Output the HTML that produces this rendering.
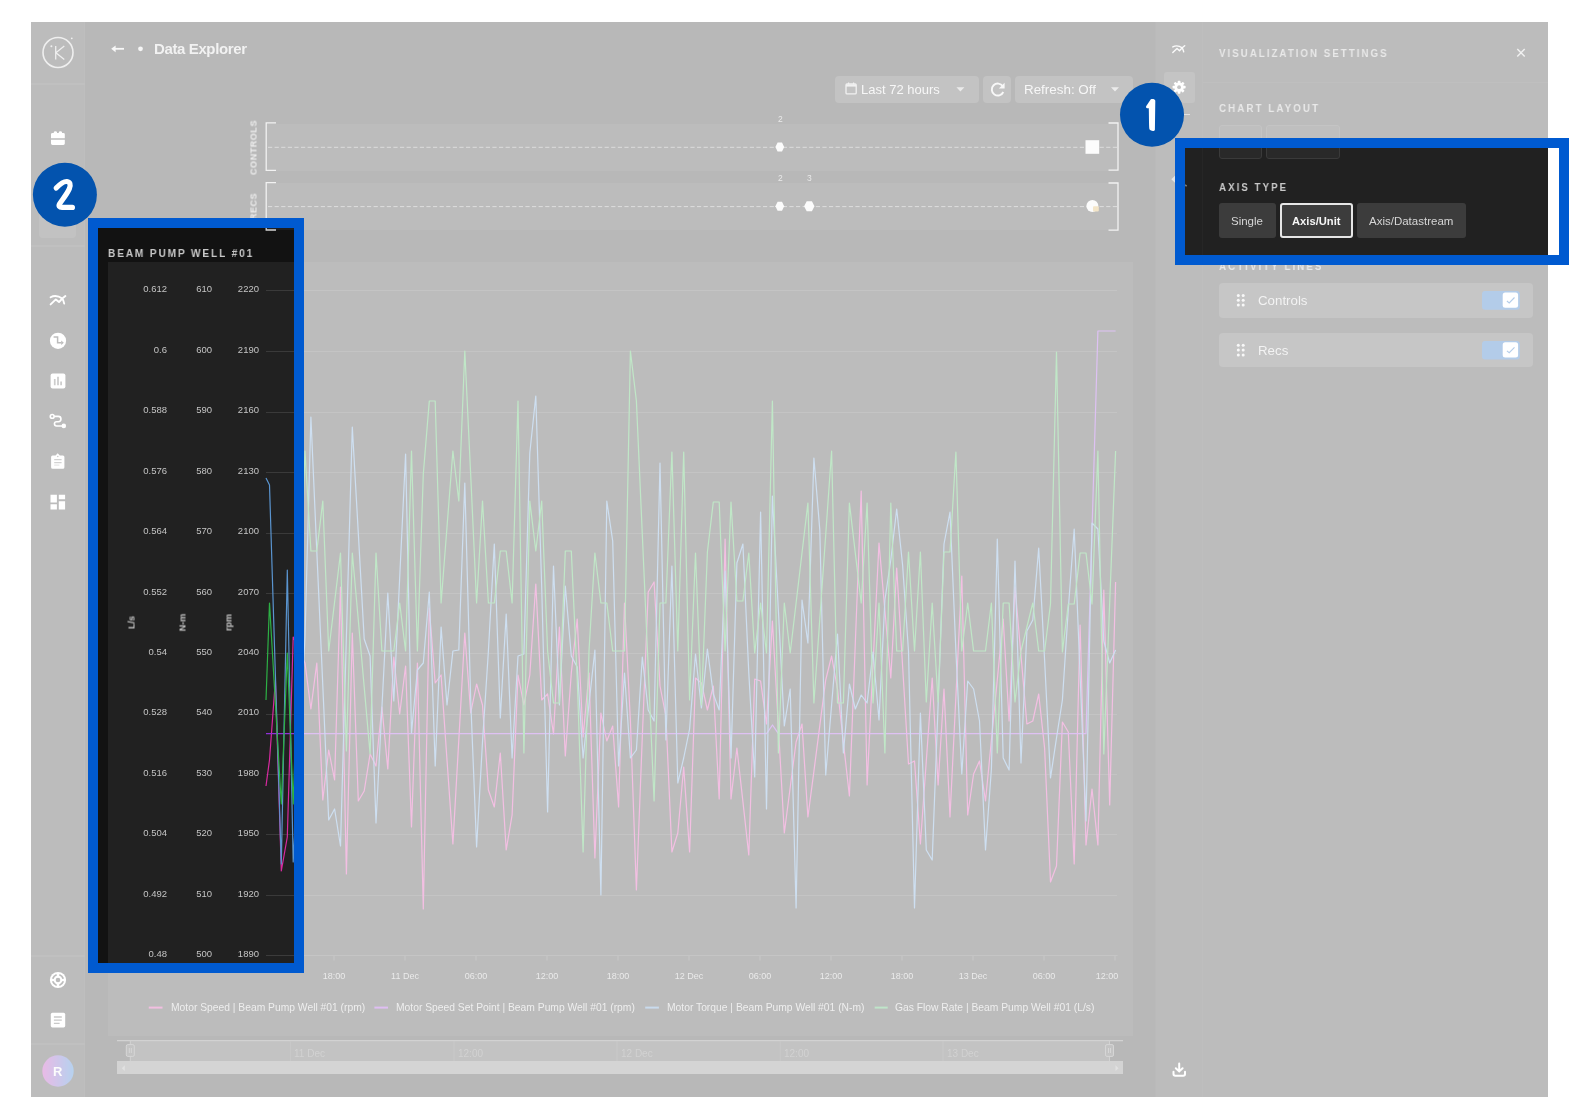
<!DOCTYPE html>
<html><head><meta charset="utf-8">
<style>
*{box-sizing:border-box;margin:0;padding:0}
html,body{width:1580px;height:1120px;overflow:hidden;background:#fff}
body{position:relative;font-family:"Liberation Sans",sans-serif;color:#e0e0e0}
.a{position:absolute}
svg.a{left:0;top:0;overflow:visible}
.t{position:absolute;white-space:nowrap;line-height:1}
.t,.yl,.xl,.lg,.nl,.sh{will-change:transform}
.yl{position:absolute;white-space:nowrap;line-height:1;font-size:9.5px;color:#c4c4c4;text-align:right;width:40px}
.xl{position:absolute;white-space:nowrap;line-height:1;font-size:9px;color:#bdbdbd;text-align:center;width:60px}
.lg{position:absolute;white-space:nowrap;line-height:1;font-size:10.3px;color:#c8c8c8}
.nl{position:absolute;white-space:nowrap;line-height:1;font-size:10px;color:#6a6a6a}
.sh{position:absolute;white-space:nowrap;line-height:1;font-size:11.5px;font-weight:bold;color:#b4b4b4;transform:scaleX(0.85);transform-origin:0 0}
</style></head><body>
<div class="a" style="left:31px;top:22px;width:1517px;height:1075px;background:#121212"></div>

<!-- ============ SIDEBAR ============ -->
<div class="a" style="left:31px;top:22px;width:54px;height:1075px;background:#202020"></div>
<div class="a" style="left:84px;top:22px;width:1px;height:1075px;background:#262626"></div>
<div class="a" style="left:31px;top:83px;width:54px;height:2px;background:#2e2e2e"></div>
<div class="a" style="left:31px;top:245px;width:54px;height:2px;background:#2e2e2e"></div>
<div class="a" style="left:31px;top:955px;width:54px;height:2px;background:#2e2e2e"></div>
<div class="a" style="left:31px;top:1043px;width:54px;height:2px;background:#2e2e2e"></div>
<div class="a" style="left:39px;top:199px;width:37px;height:39px;background:#353535;border-radius:4px"></div>
<svg class="a" width="1580" height="1120">
 <g fill="none" stroke="#c8c8c8">
  <circle cx="58" cy="52.5" r="15" stroke-width="1.6"/>
  <path d="M55.7 46V59.6M64.3 46L55.9 52.8L64.3 59.6" stroke-width="1.3"/>
 </g>
 <circle cx="51.4" cy="46.2" r="1" fill="#c8c8c8"/>
 <circle cx="71.8" cy="38.3" r="0.9" fill="#cfcfcf"/>
 <!-- calendar -->
 <path fill="#fff" d="M51 134.2Q51 133 52.5 133H53.8V132.2Q53.8 131.3 55.4 131.3Q57 131.3 57 132.2V133H58.8V132.2Q58.8 131.3 60.4 131.3Q62 131.3 62 132.2V133H63.3Q64.8 133 64.8 134.2V138.2H51Z M51 139.8H64.8V143.6Q64.8 145 63.3 145H52.5Q51 145 51 143.6Z"/>
 <!-- trend -->
 <path fill="none" stroke="#fff" stroke-width="1.9" stroke-linecap="round" stroke-linejoin="round" d="M50.6 297.3Q56 294.2 62.3 298.5Q63.6 300.5 64.2 303.6M50.6 304.4L55.8 299.4L59 302.1L62.3 298.5L65.4 296"/>
 <!-- circle step -->
 <circle cx="58" cy="340.8" r="8.1" fill="#fff"/>
 <path fill="none" stroke="#202020" stroke-width="1.5" d="M53.6 337H57.6V342.7H61.4"/>
 <path fill="#202020" d="M61.2 340.4L63.8 342.7L61.2 345Z"/>
 <!-- bar chart -->
 <rect x="50.6" y="373.6" width="14.8" height="14.9" rx="2" fill="#fff"/>
 <path fill="#595959" d="M53.9 379H55.6V385.3H53.9Z M57.1 376.7H58.9V385.3H57.1Z M60.2 381.6H62V385.3H60.2Z"/>
 <!-- route -->
 <circle cx="52.2" cy="416.4" r="1.9" fill="none" stroke="#fff" stroke-width="1.6"/>
 <path fill="none" stroke="#fff" stroke-width="1.6" d="M54.1 416.4H58.3A2.65 2.65 0 0 1 58.3 421.7H56.6A2.15 2.15 0 0 0 56.6 426H62"/>
 <circle cx="63.8" cy="425.9" r="2.3" fill="#fff"/>
 <!-- clipboard -->
 <path fill="#fff" d="M52.6 455.4H55.6L57.7 453.3L59.8 455.4H62.9Q64.4 455.4 64.4 456.9V467.2Q64.4 468.7 62.9 468.7H52.6Q51.1 468.7 51.1 467.2V456.9Q51.1 455.4 52.6 455.4Z"/>
 <path fill="none" stroke="#6a6a6a" stroke-width="1.1" d="M54.2 459.6H61.6M54.2 462.6H61.6"/>
 <path fill="none" stroke="#a0a0a0" stroke-width="1.1" d="M54.2 465.1H59.4"/>
 <circle cx="57.8" cy="456.5" r="0.8" fill="#505050"/>
 <!-- dashboard -->
 <path fill="#fff" d="M50.5 494.7H56.9V502.6H50.5Z M50.5 504.3H56.9V509.4H50.5Z M58.8 494.7H65.1V499.3H58.8Z M58.8 501.3H65.1V509.4H58.8Z"/>
 <!-- lifebuoy -->
 <circle cx="58" cy="980" r="8.1" fill="#fff"/>
 <circle cx="58" cy="980" r="2.3" fill="#202020"/>
 <path fill="none" stroke="#202020" stroke-width="1.7" stroke-linecap="round" d="M62.95 981.90A5.3 5.3 0 0 1 59.90 984.95M56.10 984.95A5.3 5.3 0 0 1 53.05 981.90M53.05 978.10A5.3 5.3 0 0 1 56.10 975.05M59.90 975.05A5.3 5.3 0 0 1 62.95 978.10"/>
 <!-- doc -->
 <rect x="50.8" y="1012.8" width="14.4" height="14.6" rx="1.6" fill="#fff"/>
 <path fill="none" stroke="#4a4a4a" stroke-width="1.3" d="M53.9 1017H61.8M53.9 1020.1H61.8M53.9 1023.3H59.6"/>
 <defs><linearGradient id="av" x1="0" x2="1" y1="0" y2="0"><stop offset="0" stop-color="#b419aa"/><stop offset="1" stop-color="#0b67c8"/></linearGradient></defs>
 <circle cx="58" cy="1071" r="15.7" fill="url(#av)"/>
</svg>
<div class="t" style="left:53px;top:1065px;font-size:13px;font-weight:bold;color:#f4f4f4">R</div>

<!-- ============ MAIN ============ -->
<svg class="a" width="1580" height="1120">
 <path fill="none" stroke="#e8e8e8" stroke-width="1.8" d="M113 48.8H124"/>
 <path fill="#e8e8e8" d="M111.2 48.8L115.6 45.4V52.2Z"/>
 <circle cx="140.5" cy="48.8" r="2.4" fill="#e0e0e0"/>
</svg>
<div class="t" style="left:154px;top:41.2px;font-size:15px;font-weight:bold;letter-spacing:-0.38px;color:#d4d4d4">Data Explorer</div>

<!-- toolbar -->
<div class="a" style="left:835px;top:76px;width:144px;height:27px;background:#363636;border-radius:4px"></div>
<div class="a" style="left:983px;top:76px;width:28px;height:27px;background:#363636;border-radius:4px"></div>
<div class="a" style="left:1015px;top:76px;width:118px;height:27px;background:#363636;border-radius:4px"></div>
<div class="t" style="left:861px;top:82.9px;font-size:13px;color:#e4e4e4">Last 72 hours</div>
<div class="t" style="left:1024px;top:82.6px;font-size:13.4px;color:#e4e4e4">Refresh: Off</div>
<svg class="a" width="1580" height="1120">
 <rect x="846" y="84" width="10.2" height="9.9" rx="1" fill="none" stroke="#cfcfcf" stroke-width="1.3"/>
 <path d="M846 85.5H856.2" stroke="#cfcfcf" stroke-width="2.2"/>
 <path d="M848.6 82.5V84.5M853.6 82.5V84.5" stroke="#cfcfcf" stroke-width="1.2"/>
 <path fill="#bdbdbd" d="M956.4 87.2H964.4L960.4 91.6Z M1111 87.2H1119L1115 91.6Z"/>
 <path fill="none" stroke="#e6e6e6" stroke-width="1.9" d="M1002.8 86.2A6 6 0 1 0 1003.3 92"/>
 <path fill="#e6e6e6" d="M1004.6 82.8V88.6H998.8Z"/>
</svg>

<!-- activity lanes -->
<div class="a" style="left:267px;top:124px;width:851px;height:47px;background:#1f1f1f"></div>
<div class="a" style="left:267px;top:183px;width:851px;height:47px;background:#1f1f1f"></div>
<div class="t" style="left:226px;top:142.5px;width:56px;font-size:9px;font-weight:bold;letter-spacing:0.55px;color:#c9c9c9;transform:rotate(-90deg);text-align:center">CONTROLS</div>
<div class="t" style="left:226px;top:202px;width:56px;font-size:9px;font-weight:bold;letter-spacing:0.55px;color:#c9c9c9;transform:rotate(-90deg);text-align:center">RECS</div>
<svg class="a" width="1580" height="1120">
 <g fill="none" stroke="#d4d4d4" stroke-width="1.3">
  <path d="M276 122.8H266.2V170.3H276M1108.5 123H1118V170.2H1108.5"/>
  <path d="M276 182.6H266.2V230H276M1108.5 183H1118V230.2H1108.5"/>
 </g>
 <g stroke="#8e8e8e" stroke-width="1" stroke-dasharray="4.2 2.4">
  <path d="M268 147.3H1117M268 206.6H1117"/>
 </g>
 <g fill="#f4f4f4">
  <path d="M777.6 142.4H782L784.2 146.9L782 151.4H777.6L775.4 146.9Z"/>
  <path d="M777.6 201.7H782L784.2 206.2L782 210.7H777.6L775.4 206.2Z"/>
  <path d="M806.7 201.2H811.9L814.5 206.2L811.9 211.2H806.7L804.1 206.2Z"/>
  <rect x="1085.5" y="140.2" width="13.7" height="13.6"/>
  <circle cx="1092.4" cy="206" r="6"/>
 </g>
 <rect x="1093" y="206.2" width="5.8" height="5.4" rx="1" fill="#d8a848"/>
</svg>
<div class="t" style="left:777.5px;top:115px;font-size:8.5px;color:#bdbdbd">2</div>
<div class="t" style="left:777.5px;top:174px;font-size:8.5px;color:#bdbdbd">2</div>
<div class="t" style="left:807px;top:174px;font-size:8.5px;color:#bdbdbd">3</div>

<!-- chart panel -->
<div class="a" style="left:108px;top:262px;width:1025px;height:773.5px;background:#212121"></div>
<div class="t" style="left:108px;top:247.8px;font-size:11.5px;font-weight:bold;letter-spacing:2.11px;color:#c8c8c8;transform:scaleX(0.88);transform-origin:0 0">BEAM PUMP WELL #01</div>

<!--GRID-->
<svg class="a" width="1580" height="1120">
<g stroke="#3a3a3a" stroke-width="1">
<path d="M266 290.5H1117"/>
<path d="M266 351.5H1117"/>
<path d="M266 412.5H1117"/>
<path d="M266 472.5H1117"/>
<path d="M266 533.5H1117"/>
<path d="M266 593.5H1117"/>
<path d="M266 653.5H1117"/>
<path d="M266 714.5H1117"/>
<path d="M266 774.5H1117"/>
<path d="M266 834.5H1117"/>
<path d="M266 895.5H1117"/>
</g>
<path d="M266 955.5H1117.6" stroke="#3c3c3c" stroke-width="1"/>
<path d="M334.0 955.5V960.5M405.0 955.5V960.5M476.0 955.5V960.5M547.0 955.5V960.5M618.0 955.5V960.5M689.0 955.5V960.5M760.0 955.5V960.5M831.0 955.5V960.5M902.0 955.5V960.5M973.0 955.5V960.5M1044.0 955.5V960.5M1115.0 955.5V960.5" stroke="#4a4a4a" stroke-width="1"/>
</svg>
<div class="yl" style="left:127.2px;top:284.3px">0.612</div>
<div class="yl" style="left:171.6px;top:284.3px">610</div>
<div class="yl" style="left:218.8px;top:284.3px">2220</div>
<div class="yl" style="left:127.2px;top:344.7px">0.6</div>
<div class="yl" style="left:171.6px;top:344.7px">600</div>
<div class="yl" style="left:218.8px;top:344.7px">2190</div>
<div class="yl" style="left:127.2px;top:405.2px">0.588</div>
<div class="yl" style="left:171.6px;top:405.2px">590</div>
<div class="yl" style="left:218.8px;top:405.2px">2160</div>
<div class="yl" style="left:127.2px;top:465.6px">0.576</div>
<div class="yl" style="left:171.6px;top:465.6px">580</div>
<div class="yl" style="left:218.8px;top:465.6px">2130</div>
<div class="yl" style="left:127.2px;top:526.1px">0.564</div>
<div class="yl" style="left:171.6px;top:526.1px">570</div>
<div class="yl" style="left:218.8px;top:526.1px">2100</div>
<div class="yl" style="left:127.2px;top:586.5px">0.552</div>
<div class="yl" style="left:171.6px;top:586.5px">560</div>
<div class="yl" style="left:218.8px;top:586.5px">2070</div>
<div class="yl" style="left:127.2px;top:647.0px">0.54</div>
<div class="yl" style="left:171.6px;top:647.0px">550</div>
<div class="yl" style="left:218.8px;top:647.0px">2040</div>
<div class="yl" style="left:127.2px;top:707.4px">0.528</div>
<div class="yl" style="left:171.6px;top:707.4px">540</div>
<div class="yl" style="left:218.8px;top:707.4px">2010</div>
<div class="yl" style="left:127.2px;top:767.9px">0.516</div>
<div class="yl" style="left:171.6px;top:767.9px">530</div>
<div class="yl" style="left:218.8px;top:767.9px">1980</div>
<div class="yl" style="left:127.2px;top:828.3px">0.504</div>
<div class="yl" style="left:171.6px;top:828.3px">520</div>
<div class="yl" style="left:218.8px;top:828.3px">1950</div>
<div class="yl" style="left:127.2px;top:888.8px">0.492</div>
<div class="yl" style="left:171.6px;top:888.8px">510</div>
<div class="yl" style="left:218.8px;top:888.8px">1920</div>
<div class="yl" style="left:127.2px;top:949.2px">0.48</div>
<div class="yl" style="left:171.6px;top:949.2px">500</div>
<div class="yl" style="left:218.8px;top:949.2px">1890</div>
<div class="t" style="left:111.5px;top:618.0px;width:40px;text-align:center;font-size:9px;font-weight:bold;color:#c8c8c8;transform:rotate(-90deg)">L/s</div>
<div class="t" style="left:163.2px;top:618.0px;width:40px;text-align:center;font-size:9px;font-weight:bold;color:#c8c8c8;transform:rotate(-90deg)">N-m</div>
<div class="t" style="left:209.0px;top:618.0px;width:40px;text-align:center;font-size:9px;font-weight:bold;color:#c8c8c8;transform:rotate(-90deg)">rpm</div>
<div class="xl" style="left:304.0px;top:971.5px">18:00</div>
<div class="xl" style="left:375.0px;top:971.5px">11 Dec</div>
<div class="xl" style="left:446.0px;top:971.5px">06:00</div>
<div class="xl" style="left:517.0px;top:971.5px">12:00</div>
<div class="xl" style="left:588.0px;top:971.5px">18:00</div>
<div class="xl" style="left:659.0px;top:971.5px">12 Dec</div>
<div class="xl" style="left:730.0px;top:971.5px">06:00</div>
<div class="xl" style="left:801.0px;top:971.5px">12:00</div>
<div class="xl" style="left:872.0px;top:971.5px">18:00</div>
<div class="xl" style="left:943.0px;top:971.5px">13 Dec</div>
<div class="xl" style="left:1014.0px;top:971.5px">06:00</div>
<div class="xl" style="left:1076.8px;top:971.5px">12:00</div>
<svg class="a" width="1580" height="1120">
<path d="M148.8 1007.6H162.5" stroke="#d42a9c" stroke-width="2"/>
<path d="M374.4 1007.6H388" stroke="#9326d8" stroke-width="2"/>
<path d="M645.2 1007.6H658.9" stroke="#4a86c4" stroke-width="2"/>
<path d="M874.7 1007.6H887.7" stroke="#2aa84a" stroke-width="2"/>
</svg>
<div class="lg" style="left:170.7px;top:1003.0px">Motor Speed | Beam Pump Well #01 (rpm)</div>
<div class="lg" style="left:395.6px;top:1003.0px">Motor Speed Set Point | Beam Pump Well #01 (rpm)</div>
<div class="lg" style="left:667px;top:1003.0px">Motor Torque | Beam Pump Well #01 (N-m)</div>
<div class="lg" style="left:895.3px;top:1003.0px">Gas Flow Rate | Beam Pump Well #01 (L/s)</div>
<div class="a" style="left:117px;top:1041px;width:1006px;height:20px;background:#363636"></div>
<div class="a" style="left:117px;top:1041px;width:13px;height:20px;background:#131313"></div>
<div class="a" style="left:1110px;top:1041px;width:13px;height:20px;background:#131313"></div>
<div class="a" style="left:117px;top:1061px;width:1006px;height:12.5px;background:#707070"></div>
<div class="a" style="left:117px;top:1061px;width:13px;height:12.5px;background:#6c6c6c"></div>
<div class="a" style="left:1110px;top:1061px;width:13px;height:12.5px;background:#6c6c6c"></div>
<svg class="a" width="1580" height="1120">
<path d="M117 1040.6H1123" stroke="#6a6a6a" stroke-width="1.2"/>
<path d="M290.4 1041V1061" stroke="#4a4a4a" stroke-width="1"/>
<path d="M454 1041V1061" stroke="#4a4a4a" stroke-width="1"/>
<path d="M617 1041V1061" stroke="#4a4a4a" stroke-width="1"/>
<path d="M780.3 1041V1061" stroke="#4a4a4a" stroke-width="1"/>
<path d="M943 1041V1061" stroke="#4a4a4a" stroke-width="1"/>
<path d="M130.3 1041V1061M1109.5 1041V1061" stroke="#6a6a6a" stroke-width="1"/>
<rect x="126.3" y="1044.6" width="8" height="11.8" rx="1.5" fill="#3a3a3a" stroke="#777" stroke-width="1"/>
<rect x="1105.5" y="1044.6" width="8" height="11.8" rx="1.5" fill="#3a3a3a" stroke="#777" stroke-width="1"/>
<path d="M129.3 1048V1053M131.3 1048V1053M1108.5 1048V1053M1110.5 1048V1053" stroke="#888" stroke-width="0.8"/>
<path d="M124.8 1065.3L121.8 1068.2L124.8 1071Z M1115.5 1065.3L1118.5 1068.2L1115.5 1071Z" fill="#9a9a9a"/>
</svg>
<div class="nl" style="left:294.4px;top:1048.5px">11 Dec</div>
<div class="nl" style="left:458.0px;top:1048.5px">12:00</div>
<div class="nl" style="left:621.0px;top:1048.5px">12 Dec</div>
<div class="nl" style="left:784.3px;top:1048.5px">12:00</div>
<div class="nl" style="left:947.0px;top:1048.5px">13 Dec</div>
<!--/GRID-->

<!--CHARTLINES-->
<svg class="a" width="1580" height="1120"><g fill="none" stroke-width="1.2" stroke-linejoin="round">
<path stroke="#d82aa0" d="M266.0 786.0 L269.5 760.0 L275.4 680.0 L281.3 871.0 L287.3 837.0 L293.2 637.0 L299.1 650.0 L305.0 663.0 L310.9 709.0 L316.8 663.0 L322.8 800.0 L328.7 750.0 L334.6 780.0 L340.5 587.0 L346.4 874.0 L352.3 633.0 L358.3 801.0 L364.2 791.0 L370.1 754.0 L376.0 766.0 L381.9 707.0 L387.8 769.0 L393.8 657.0 L399.7 714.0 L405.6 666.0 L411.5 827.0 L417.4 663.0 L423.3 909.0 L429.3 608.0 L435.2 683.0 L441.1 675.0 L447.0 760.0 L452.9 844.0 L458.8 740.0 L464.8 633.0 L470.7 713.0 L476.6 684.0 L482.5 705.0 L488.4 790.0 L494.3 807.0 L500.3 753.0 L506.2 850.0 L512.1 815.0 L518.0 675.0 L523.9 705.0 L529.8 675.0 L535.8 584.0 L541.7 700.0 L547.6 694.0 L553.5 734.0 L559.4 627.0 L565.3 756.0 L571.3 673.0 L577.2 619.0 L583.1 737.0 L589.0 673.0 L594.9 858.0 L600.9 713.0 L606.8 741.0 L612.7 726.0 L618.6 807.0 L624.5 603.0 L630.4 721.0 L636.4 890.0 L642.3 737.0 L648.2 592.0 L654.1 582.0 L660.0 686.0 L665.9 716.0 L671.9 852.0 L677.8 833.0 L683.7 767.0 L689.6 852.0 L695.5 678.0 L701.4 683.0 L707.4 710.0 L713.3 686.0 L719.2 799.0 L725.1 539.0 L731.0 799.0 L736.9 748.0 L742.9 801.5 L748.8 855.0 L754.7 679.0 L760.6 681.0 L766.5 724.0 L772.4 621.0 L778.4 727.0 L784.3 833.0 L790.2 787.5 L796.1 742.0 L802.0 724.0 L807.9 817.0 L813.9 771.3 L819.8 725.7 L825.7 680.0 L831.6 656.0 L837.5 689.0 L843.4 742.5 L849.4 796.0 L855.3 643.5 L861.2 491.0 L867.1 785.0 L873.0 664.0 L879.0 543.0 L884.9 610.5 L890.8 678.0 L896.7 568.0 L902.6 666.0 L908.5 764.0 L914.5 761.0 L920.4 844.0 L926.3 761.0 L932.2 678.0 L938.1 785.0 L944.0 689.0 L950.0 817.0 L955.9 696.5 L961.8 576.0 L967.7 815.0 L973.6 774.0 L979.5 761.0 L985.5 801.0 L991.4 740.3 L997.3 679.7 L1003.2 619.0 L1009.1 721.0 L1015.0 587.0 L1021.0 655.5 L1026.9 724.0 L1032.8 721.0 L1038.7 694.0 L1044.6 748.0 L1050.5 882.0 L1056.5 866.0 L1062.4 722.0 L1068.3 732.0 L1074.2 864.0 L1080.1 625.0 L1086.0 845.0 L1092.0 789.0 L1097.9 845.0 L1103.8 590.0 L1109.7 805.0 L1115.6 582.0"/>
<path stroke="#9030d8" d="M266 733.7H766.6L772.5 725L778.4 733.7H1086L1097.9 331H1115.6"/>
<path stroke="#5a94cf" d="M266.0 478.0 L269.5 485.0 L275.4 675.0 L281.3 864.0 L287.3 570.0 L293.2 862.0 L299.1 750.0 L305.0 637.0 L310.9 417.0 L316.8 551.3 L322.8 685.7 L328.7 820.0 L334.6 809.0 L340.5 846.0 L346.4 636.5 L352.3 427.0 L358.3 533.0 L364.2 639.0 L370.1 656.0 L376.0 823.0 L381.9 708.0 L387.8 593.0 L393.8 701.0 L399.7 577.5 L405.6 454.0 L411.5 733.0 L417.4 670.0 L423.3 663.0 L429.3 592.0 L435.2 766.0 L441.1 627.0 L447.0 705.0 L452.9 651.0 L458.8 650.0 L464.8 483.0 L470.7 700.0 L476.6 847.0 L482.5 742.0 L488.4 651.0 L494.3 544.0 L500.3 718.0 L506.2 614.0 L512.1 758.0 L518.0 656.0 L523.9 654.0 L529.8 453.0 L535.8 396.0 L541.7 587.0 L547.6 812.0 L553.5 566.0 L559.4 705.0 L565.3 586.0 L571.3 656.0 L577.2 667.0 L583.1 758.0 L589.0 704.0 L594.9 650.0 L600.9 895.0 L606.8 501.0 L612.7 541.0 L618.6 766.0 L624.5 673.0 L630.4 758.0 L636.4 750.0 L642.3 657.0 L648.2 710.0 L654.1 721.0 L660.0 463.0 L665.9 740.0 L671.9 566.0 L677.8 783.0 L683.7 758.0 L689.6 729.0 L695.5 654.0 L701.4 708.0 L707.4 649.0 L713.3 694.0 L719.2 710.0 L725.1 571.0 L731.0 758.0 L736.9 563.0 L742.9 544.0 L748.8 673.0 L754.7 777.0 L760.6 512.0 L766.5 809.0 L772.4 496.0 L778.4 611.0 L784.3 726.0 L790.2 689.0 L796.1 908.0 L802.0 600.0 L807.9 643.0 L813.9 458.0 L819.8 530.0 L825.7 775.0 L831.6 705.0 L837.5 634.0 L843.4 753.0 L849.4 684.0 L855.3 709.0 L861.2 695.0 L867.1 703.0 L873.0 652.0 L879.0 720.0 L884.9 600.0 L890.8 560.0 L896.7 509.0 L902.6 565.0 L908.5 651.0 L914.5 908.0 L920.4 713.0 L926.3 850.0 L932.2 860.0 L938.1 705.0 L944.0 544.0 L950.0 512.0 L955.9 651.0 L961.8 774.0 L967.7 681.0 L973.6 689.0 L979.5 721.0 L985.5 850.0 L991.4 769.0 L997.3 539.0 L1003.2 758.0 L1009.1 770.0 L1015.0 561.0 L1021.0 763.0 L1026.9 631.0 L1032.8 620.0 L1038.7 548.0 L1044.6 660.0 L1050.5 778.0 L1056.5 738.0 L1062.4 700.0 L1068.3 609.0 L1074.2 529.0 L1080.1 675.0 L1086.0 821.0 L1092.0 523.0 L1097.9 529.0 L1103.8 641.0 L1109.7 663.0 L1115.6 650.0"/>
<path stroke="#2db045" d="M266.0 700.0 L269.5 603.0 L275.4 703.5 L281.3 804.0 L287.3 653.0 L293.2 804.0 L299.1 627.5 L305.0 451.0 L310.9 551.0 L316.8 551.0 L322.8 501.0 L328.7 651.0 L334.6 602.0 L340.5 553.0 L346.4 751.0 L352.3 553.0 L358.3 620.0 L364.2 687.0 L370.1 754.0 L376.0 553.0 L381.9 651.0 L387.8 651.0 L393.8 651.0 L399.7 603.0 L405.6 651.0 L411.5 451.0 L417.4 651.0 L423.3 474.0 L429.3 401.0 L435.2 401.0 L441.1 603.0 L447.0 527.0 L452.9 451.0 L458.8 501.0 L464.8 351.0 L470.7 475.0 L476.6 603.0 L482.5 501.0 L488.4 603.0 L494.3 603.0 L500.3 551.0 L506.2 551.0 L512.1 603.0 L518.0 401.0 L523.9 753.0 L529.8 501.0 L535.8 551.0 L541.7 501.0 L547.6 651.0 L553.5 703.0 L559.4 703.0 L565.3 551.0 L571.3 551.0 L577.2 678.0 L583.1 852.0 L589.0 651.0 L594.9 553.0 L600.9 603.0 L606.8 603.0 L612.7 651.0 L618.6 651.0 L624.5 651.0 L630.4 351.0 L636.4 401.0 L642.3 534.3 L648.2 667.7 L654.1 801.0 L660.0 603.0 L665.9 603.0 L671.9 452.0 L677.8 651.0 L683.7 452.0 L689.6 700.0 L695.5 553.0 L701.4 705.0 L707.4 552.0 L713.3 502.0 L719.2 502.0 L725.1 651.0 L731.0 502.0 L736.9 601.0 L742.9 601.0 L748.8 553.0 L754.7 653.0 L760.6 603.0 L766.5 653.0 L772.4 401.0 L778.4 753.0 L784.3 603.0 L790.2 653.0 L796.1 603.0 L802.0 553.0 L807.9 503.0 L813.9 703.0 L819.8 619.0 L825.7 535.0 L831.6 451.0 L837.5 703.0 L843.4 703.0 L849.4 503.0 L855.3 553.0 L861.2 603.0 L867.1 503.0 L873.0 703.0 L879.0 603.0 L884.9 753.0 L890.8 503.0 L896.7 651.0 L902.6 651.0 L908.5 552.0 L914.5 651.0 L920.4 552.0 L926.3 702.0 L932.2 603.0 L938.1 702.0 L944.0 552.0 L950.0 552.0 L955.9 452.0 L961.8 651.0 L967.7 603.0 L973.6 651.0 L979.5 651.0 L985.5 651.0 L991.4 603.0 L997.3 753.0 L1003.2 603.0 L1009.1 603.0 L1015.0 702.0 L1021.0 651.0 L1026.9 627.0 L1032.8 603.0 L1038.7 651.0 L1044.6 651.0 L1050.5 604.0 L1056.5 352.0 L1062.4 652.0 L1068.3 604.0 L1074.2 604.0 L1080.1 553.0 L1086.0 553.0 L1092.0 604.0 L1097.9 451.0 L1103.8 754.0 L1109.7 602.5 L1115.6 451.0"/>
</g></svg>
<!--/CHARTLINES-->

<!-- ============ RIGHT PANEL ============ -->
<div class="a" style="left:1156px;top:22px;width:392px;height:1075px;background:#212121"></div>
<div class="a" style="left:1155px;top:22px;width:1px;height:1075px;background:#1a1a1a"></div>
<div class="a" style="left:1202px;top:22px;width:1px;height:1075px;background:#262626"></div>
<div class="a" style="left:1203px;top:82px;width:345px;height:1px;background:#2a2a2a"></div>
<div class="a" style="left:1182px;top:114px;width:8px;height:1.3px;background:#9a9a9a"></div>
<div class="a" style="left:1164px;top:72px;width:31px;height:31px;background:#3a3a3a;border-radius:3px"></div>
<svg class="a" width="1580" height="1120">
 <path fill="none" stroke="#f0f0f0" stroke-width="1.4" stroke-linecap="round" stroke-linejoin="round" d="M1172.8 46.9Q1177.2 44.4 1182.2 47.8Q1183.2 49.4 1183.7 51.9M1172.8 52.5L1177 48.5L1179.5 50.7L1182.2 47.8L1184.7 45.8"/>
 <g transform="translate(1179.1 87.2)" fill="#fff"><circle r="4.7"/><rect x="-1.35" y="-6.5" width="2.7" height="3.2" rx="0.7" transform="rotate(0)"/><rect x="-1.35" y="-6.5" width="2.7" height="3.2" rx="0.7" transform="rotate(45)"/><rect x="-1.35" y="-6.5" width="2.7" height="3.2" rx="0.7" transform="rotate(90)"/><rect x="-1.35" y="-6.5" width="2.7" height="3.2" rx="0.7" transform="rotate(135)"/><rect x="-1.35" y="-6.5" width="2.7" height="3.2" rx="0.7" transform="rotate(180)"/><rect x="-1.35" y="-6.5" width="2.7" height="3.2" rx="0.7" transform="rotate(225)"/><rect x="-1.35" y="-6.5" width="2.7" height="3.2" rx="0.7" transform="rotate(270)"/><rect x="-1.35" y="-6.5" width="2.7" height="3.2" rx="0.7" transform="rotate(315)"/></g>
 <circle cx="1179.1" cy="87.2" r="1.9" fill="#3a3a3a"/>
 <path fill="#a8a8a8" d="M1171.3 179.2L1175.5 175.3V183.2Z"/><path fill="none" stroke="#7a7a7a" stroke-width="1.6" d="M1175 180.5L1186.8 186"/>
 <path fill="none" stroke="#cfcfcf" stroke-width="1.4" d="M1517.3 49L1524.7 56.5M1524.7 49L1517.3 56.5"/>
 <path fill="none" stroke="#fff" stroke-width="2" stroke-linecap="round" d="M1179.2 1063.5V1071.2M1175.8 1068.3L1179.2 1071.5L1182.6 1068.3"/>
 <path fill="none" stroke="#fff" stroke-width="2" stroke-linecap="round" d="M1173.5 1071.8V1074Q1173.5 1075.8 1175.3 1075.8H1183.2Q1185 1075.8 1185 1074V1071.8"/>
</svg>
<div class="sh" style="left:1219px;top:47.5px;letter-spacing:2.34px">VISUALIZATION SETTINGS</div>
<div class="sh" style="left:1219px;top:102.9px;letter-spacing:2.44px">CHART LAYOUT</div>
<div class="a" style="left:1219px;top:124.5px;width:43px;height:34.5px;background:#292929;border:1px solid #3a3a3a;border-radius:3px"></div>
<div class="a" style="left:1266px;top:124.5px;width:74px;height:34.5px;background:#292929;border:1px solid #3a3a3a;border-radius:3px"></div>
<div class="sh" style="left:1218.5px;top:181.7px;letter-spacing:2.35px;color:#c8c8c8">AXIS TYPE</div>
<div class="a" style="left:1219px;top:203.3px;width:57.2px;height:34.6px;background:#3c3c3c;border-radius:3px"></div>
<div class="a" style="left:1280px;top:203.3px;width:73.2px;height:34.6px;background:#3c3c3c;border:2px solid #e6e6e6;border-radius:3px"></div>
<div class="a" style="left:1357px;top:203.3px;width:109.4px;height:34.6px;background:#3c3c3c;border-radius:3px"></div>
<div class="t" style="left:1231.4px;top:215.8px;font-size:11.5px;color:#d6d6d6">Single</div>
<div class="t" style="left:1292.4px;top:216px;font-size:11.2px;font-weight:bold;color:#f6f6f6">Axis/Unit</div>
<div class="t" style="left:1369.3px;top:215.8px;font-size:11.5px;color:#d6d6d6">Axis/Datastream</div>
<div class="sh" style="left:1219px;top:260.6px;letter-spacing:2.4px">ACTIVITY LINES</div>
<div class="a" style="left:1219px;top:283.3px;width:314px;height:34.3px;background:#404040;border-radius:4px"></div>
<div class="a" style="left:1219px;top:333.1px;width:314px;height:34.4px;background:#404040;border-radius:4px"></div>
<div class="t" style="left:1258px;top:294.1px;font-size:13.3px;color:#d8d8d8">Controls</div>
<div class="t" style="left:1258px;top:344px;font-size:13.3px;color:#d8d8d8">Recs</div>
<svg class="a" width="1580" height="1120">
 <g fill="#e8e8e8">
  <circle cx="1238.3" cy="295.4" r="1.5"/><circle cx="1243.2" cy="295.4" r="1.5"/>
  <circle cx="1238.3" cy="300.2" r="1.5"/><circle cx="1243.2" cy="300.2" r="1.5"/>
  <circle cx="1238.3" cy="305.1" r="1.5"/><circle cx="1243.2" cy="305.1" r="1.5"/>
  <circle cx="1238.3" cy="345.2" r="1.5"/><circle cx="1243.2" cy="345.2" r="1.5"/>
  <circle cx="1238.3" cy="350" r="1.5"/><circle cx="1243.2" cy="350" r="1.5"/>
  <circle cx="1238.3" cy="354.9" r="1.5"/><circle cx="1243.2" cy="354.9" r="1.5"/>
 </g>
 <rect x="1482" y="291.1" width="37.8" height="18.6" rx="3" fill="#0255b6"/>
 <rect x="1482" y="340.9" width="37.8" height="18.6" rx="3" fill="#0255b6"/>
 <rect x="1502.7" y="292.4" width="15.4" height="15.4" rx="2.5" fill="#fff"/>
 <rect x="1502.7" y="342.2" width="15.4" height="15.4" rx="2.5" fill="#fff"/>
 <path fill="none" stroke="#0255b6" stroke-width="1.1" d="M1506.9 301L1509.2 302.9L1514.5 297.5M1506.9 350.8L1509.2 352.7L1514.5 347.3"/>
</svg>

<!-- ============ OVERLAY ============ -->
<svg class="a" width="1580" height="1120">
<path fill="rgba(255,255,255,0.7)" fill-rule="evenodd" d="M0 0H1580V1120H0Z M1185 148H1559V255H1185Z M98 228H294V963H98Z"/>
</svg>
<!-- highlight borders -->
<div class="a" style="left:1175px;top:138px;width:394px;height:127px;border:10px solid #005ad0"></div>
<div class="a" style="left:88px;top:218px;width:216px;height:755px;border:10px solid #005ad0"></div>
<!-- badges -->
<svg class="a" width="1580" height="1120">
 <circle cx="1152" cy="114.8" r="32" fill="#0353ae"/>
 <circle cx="64.9" cy="194.7" r="32" fill="#0353ae"/>
 <path fill="#fff" d="M1150.8 99.3C1152.3 98.6 1155.2 98.9 1155.3 100.8L1154.9 129.8C1154.7 131.6 1150.8 131.3 1149.6 129.6C1148.9 128.7 1149.1 120 1148.8 108.3C1148.3 108 1147.4 108.4 1146.6 108C1145.6 107.3 1146 106.2 1146.8 105.2Z"/>
 <path fill="none" stroke="#fff" stroke-width="5.2" stroke-linecap="round" stroke-linejoin="round" d="M56.2 188C60.5 183.5 64.5 181.3 67 181.5C70 181.8 71 184.5 69.4 188.6C66.8 194.5 62 200 59.6 203.8C58.3 206 59.5 207.4 62 207.4H72.4"/>
</svg>
</body></html>
